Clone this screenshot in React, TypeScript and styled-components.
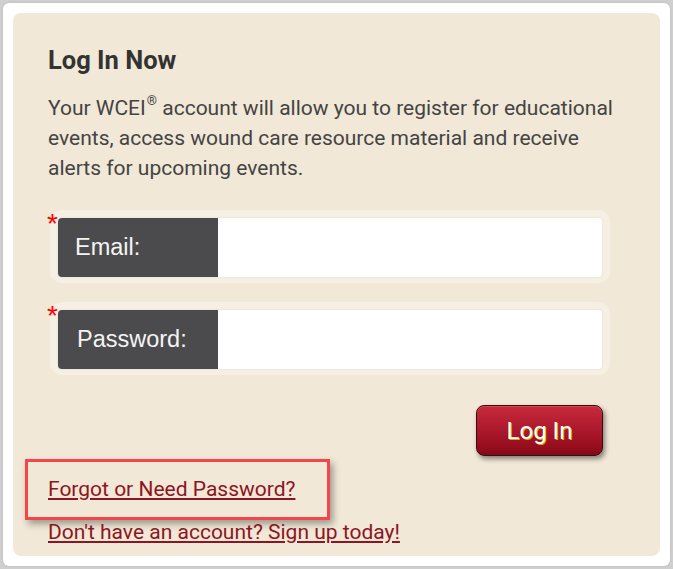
import React from 'react'
import styled, { createGlobalStyle } from 'styled-components'

const GlobalStyle = createGlobalStyle`
  html, body {
    margin: 0;
    padding: 0;
    background: #cfcfcf;
  }
  body {
    font-family: Roboto, "Liberation Sans", Arial, sans-serif;
  }
`

const App: React.FC = () => {
  return (
    <>
      <GlobalStyle />
      <StyledFrame>
        <StyledPanel>
          <StyledTitle>Log In Now</StyledTitle>
          <StyledIntro>
            Your WCEI<StyledMark>®</StyledMark> account will allow you to register for educational
            events, access wound care resource material and receive alerts for
            upcoming events.
          </StyledIntro>

          <StyledForm onSubmit={(e) => e.preventDefault()}>
            <StyledField>
              <StyledRequired>*</StyledRequired>
              <StyledFieldInner>
                <StyledLabel htmlFor="email">Email:</StyledLabel>
                <StyledInput id="email" type="email" />
              </StyledFieldInner>
            </StyledField>
            <StyledField>
              <StyledRequired>*</StyledRequired>
              <StyledFieldInner>
                <StyledLabel htmlFor="password" $indent={19}>Password:</StyledLabel>
                <StyledInput id="password" type="password" />
              </StyledFieldInner>
            </StyledField>

            <StyledActions>
              <StyledSubmit type="submit">Log In</StyledSubmit>
            </StyledActions>
          </StyledForm>

          <StyledLinks>
            <StyledLinkRow>
              <StyledHighlight />
              <StyledLink href="#">Forgot or Need Password?</StyledLink>
            </StyledLinkRow>
            <StyledLinkRow>
              <StyledLink href="#">Don't have an account? Sign up today!</StyledLink>
            </StyledLinkRow>
          </StyledLinks>
        </StyledPanel>
      </StyledFrame>
    </>
  )
}

const StyledFrame = styled.div`
  margin: 3px;
  height: 563px;
  box-sizing: border-box;
  padding: 10px;
  background: #fff;
  border-radius: 6px;
  box-shadow: 0 0 2px rgba(0, 0, 0, 0.15);
`
const StyledPanel = styled.div`
  height: 543px;
  box-sizing: border-box;
  padding: 32px 30px 0 35px;
  background: #f1e8d7;
  border-radius: 8px;
`
const StyledTitle = styled.h2`
  margin: 0 0 18px;
  font-size: 25.5px;
  line-height: 30px;
  font-weight: 700;
  color: #333;
`
const StyledIntro = styled.p`
  margin: 0;
  font-size: 21px;
  line-height: 30px;
  color: #444;
`
const StyledMark = styled.span`
  display: inline-block;
  margin-left: 1px;
  font-size: 13px;
  line-height: 10px;
  vertical-align: 10px;
`
const StyledForm = styled.form`
  margin-top: 27px;
  display: flex;
  flex-direction: column;
  gap: 19px;
`
const StyledField = styled.div`
  position: relative;
  margin-left: 2px;
  width: 560px;
  box-sizing: border-box;
  padding: 8px 8px 6px;
  background: #f6efe3;
  border-radius: 12px;
`
const StyledRequired = styled.span`
  position: absolute;
  left: -3px;
  top: 2px;
  font-family: "Liberation Sans", Arial, sans-serif;
  font-size: 28px;
  line-height: 24px;
  color: #f00;
`
const StyledFieldInner = styled.div`
  display: flex;
  height: 59px;
  border-radius: 4px;
  overflow: hidden;
  box-shadow: 0 0 3px rgba(0, 0, 0, 0.08);
`
const StyledLabel = styled.label<{ $indent?: number }>`
  flex: 0 0 160px;
  display: flex;
  align-items: center;
  box-sizing: border-box;
  padding-left: ${(p) => p.$indent ?? 17}px;
  background: #4b4b4d;
  color: #f4f4f4;
  font-family: "Liberation Sans", Arial, sans-serif;
  font-size: 23.5px;
`
const StyledInput = styled.input`
  flex: 1;
  min-width: 0;
  border: none;
  outline: none;
  background: #fff;
  font-size: 18px;
  padding: 0 12px;
`
const StyledActions = styled.div`
  display: flex;
  justify-content: flex-end;
  width: 555px;
  padding-top: 11px;
`
const StyledSubmit = styled.button`
  width: 127px;
  height: 51px;
  border: 1px solid #3a0c0e;
  border-radius: 8px;
  background: linear-gradient(to bottom, #c92a3c 0%, #a8162a 55%, #930c1c 88%, #7c0a16 100%);
  box-shadow: 2px 3px 5px rgba(0, 0, 0, 0.45), inset 0 1px 0 rgba(255, 255, 255, 0.15);
  color: #fff;
  font-family: Roboto, Arial, sans-serif;
  font-size: 24px;
  text-shadow: 1px 1px 0 #d8a800;
  cursor: pointer;
`
const StyledLinks = styled.div`
  margin-top: 18px;
  display: flex;
  flex-direction: column;
  gap: 11px;
  align-items: flex-start;
`
const StyledLinkRow = styled.div`
  position: relative;
  line-height: 30px;
`
const StyledHighlight = styled.div`
  position: absolute;
  left: -23px;
  top: -15px;
  width: 305px;
  height: 61px;
  box-sizing: border-box;
  border: 3px solid #f4464a;
  box-shadow: 3px 4px 7px rgba(0, 0, 0, 0.35);
  pointer-events: none;
`
const StyledLink = styled.a`
  font-size: 21px;
  color: #8d1522;
  text-decoration: underline;
  text-underline-offset: 2px;
`

export default App
